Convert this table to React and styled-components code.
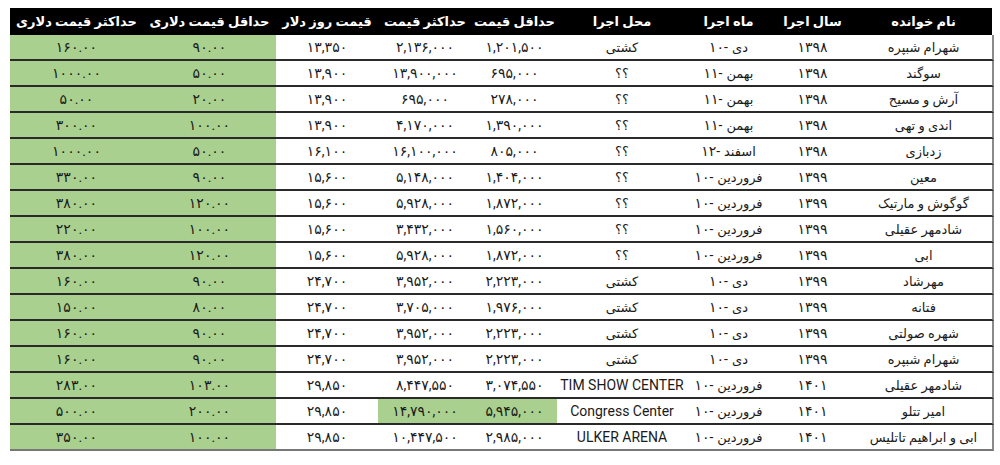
import React from "react";
import styled, { createGlobalStyle } from "styled-components";

const Global = createGlobalStyle`
  html, body { margin: 0; padding: 0; background: #fff; }
  body { font-family: Roboto, "DejaVu Sans", sans-serif; }
`;

const COLS = "137px 85px 83px 130px 85px 94px 102px 133px 133px";

const Page = styled.div`
  padding: 8px 0 0 10px;
  width: 984px;
`;

const Table = styled.div`
  direction: rtl;
  width: 984px;
  display: flex;
  flex-direction: column;
`;

const HeadRow = styled.div`
  display: grid;
  grid-template-columns: ${COLS};
  height: 27px;
  background: #000;
  margin-right: 2px;
`;

const HeadCell = styled.div`
  color: #fff;
  font-weight: bold;
  font-size: 13px;
  display: flex;
  align-items: center;
  justify-content: center;
  white-space: nowrap;
`;

const Row = styled.div`
  display: grid;
  grid-template-columns: ${COLS};
  height: 26px;
  box-sizing: border-box;
  border-bottom: 2px solid ${(p) => (p.$last ? "#777" : "#2a2a2a")};
  border-right: 2px solid #8a8a8a;
`;

const Cell = styled.div`
  background: ${(p) => (p.$green ? "#a9d08e" : "#fff")};
  color: #1a1a1a;
  font-size: ${(p) => (p.$num ? "14px" : p.$latin ? "14px" : "13px")};
  letter-spacing: ${(p) => (p.$num ? "1.5px" : "0")};
  display: flex;
  align-items: center;
  justify-content: center;
  white-space: nowrap;
  direction: ${(p) => (p.$num ? "ltr" : "rtl")};
`;

const MonthCell = styled.div`
  display: flex;
  direction: ltr;
  align-items: center;
  justify-content: center;
  gap: 4px;
  color: #1a1a1a;
  font-size: 13px;
  white-space: nowrap;
`;

const MonthNum = styled.span`
  font-size: 14px;
  letter-spacing: 1px;
`;

const headers = [
  "نام خوانده",
  "سال اجرا",
  "ماه اجرا",
  "محل اجرا",
  "حداقل قیمت",
  "حداکثر قیمت",
  "قیمت روز دلار",
  "حداقل قیمت دلاری",
  "حداکثر قیمت دلاری",
];

const rows = [
  ["شهرام شبپره", "۱۳۹۸", "۱۰", "دی", "کشتی", "۱,۲۰۱,۵۰۰", "۲,۱۳۶,۰۰۰", "۱۳,۳۵۰", "۹۰.۰۰", "۱۶۰.۰۰"],
  ["سوگند", "۱۳۹۸", "۱۱", "بهمن", "؟؟", "۶۹۵,۰۰۰", "۱۳,۹۰۰,۰۰۰", "۱۳,۹۰۰", "۵۰.۰۰", "۱۰۰۰.۰۰"],
  ["آرش و مسیح", "۱۳۹۸", "۱۱", "بهمن", "؟؟", "۲۷۸,۰۰۰", "۶۹۵,۰۰۰", "۱۳,۹۰۰", "۲۰.۰۰", "۵۰.۰۰"],
  ["اندی و تهی", "۱۳۹۸", "۱۱", "بهمن", "؟؟", "۱,۳۹۰,۰۰۰", "۴,۱۷۰,۰۰۰", "۱۳,۹۰۰", "۱۰۰.۰۰", "۳۰۰.۰۰"],
  ["زدبازی", "۱۳۹۸", "۱۲", "اسفند", "؟؟", "۸۰۵,۰۰۰", "۱۶,۱۰۰,۰۰۰", "۱۶,۱۰۰", "۵۰.۰۰", "۱۰۰۰.۰۰"],
  ["معین", "۱۳۹۹", "۱۰", "فروردین", "؟؟", "۱,۴۰۴,۰۰۰", "۵,۱۴۸,۰۰۰", "۱۵,۶۰۰", "۹۰.۰۰", "۳۳۰.۰۰"],
  ["گوگوش و مارتیک", "۱۳۹۹", "۱۰", "فروردین", "؟؟", "۱,۸۷۲,۰۰۰", "۵,۹۲۸,۰۰۰", "۱۵,۶۰۰", "۱۲۰.۰۰", "۳۸۰.۰۰"],
  ["شادمهر عقیلی", "۱۳۹۹", "۱۰", "فروردین", "؟؟", "۱,۵۶۰,۰۰۰", "۳,۴۳۲,۰۰۰", "۱۵,۶۰۰", "۱۰۰.۰۰", "۲۲۰.۰۰"],
  ["ابی", "۱۳۹۹", "۱۰", "فروردین", "؟؟", "۱,۸۷۲,۰۰۰", "۵,۹۲۸,۰۰۰", "۱۵,۶۰۰", "۱۲۰.۰۰", "۳۸۰.۰۰"],
  ["مهرشاد", "۱۳۹۹", "۱۰", "دی", "کشتی", "۲,۲۲۳,۰۰۰", "۳,۹۵۲,۰۰۰", "۲۴,۷۰۰", "۹۰.۰۰", "۱۶۰.۰۰"],
  ["فتانه", "۱۳۹۹", "۱۰", "دی", "کشتی", "۱,۹۷۶,۰۰۰", "۳,۷۰۵,۰۰۰", "۲۴,۷۰۰", "۸۰.۰۰", "۱۵۰.۰۰"],
  ["شهره صولتی", "۱۳۹۹", "۱۰", "دی", "کشتی", "۲,۲۲۳,۰۰۰", "۳,۹۵۲,۰۰۰", "۲۴,۷۰۰", "۹۰.۰۰", "۱۶۰.۰۰"],
  ["شهرام شبپره", "۱۳۹۹", "۱۰", "دی", "کشتی", "۲,۲۲۳,۰۰۰", "۳,۹۵۲,۰۰۰", "۲۴,۷۰۰", "۹۰.۰۰", "۱۶۰.۰۰"],
  ["شادمهر عقیلی", "۱۴۰۱", "۱۰", "فروردین", "TIM SHOW CENTER", "۳,۰۷۴,۵۵۰", "۸,۴۴۷,۵۵۰", "۲۹,۸۵۰", "۱۰۳.۰۰", "۲۸۳.۰۰"],
  ["امیر تتلو", "۱۴۰۱", "۱۰", "فروردین", "Congress Center", "۵,۹۴۵,۰۰۰", "۱۴,۷۹۰,۰۰۰", "۲۹,۸۵۰", "۲۰۰.۰۰", "۵۰۰.۰۰", true],
  ["ابی و ابراهیم تاتلیس", "۱۴۰۱", "۱۰", "فروردین", "ULKER ARENA", "۲,۹۸۵,۰۰۰", "۱۰,۴۴۷,۵۰۰", "۲۹,۸۵۰", "۱۰۰.۰۰", "۳۵۰.۰۰"],
];

export default function App() {
  return (
    <>
      <Global />
      <Page>
        <Table>
          <HeadRow>
            {headers.map((h) => (
              <HeadCell key={h}>{h}</HeadCell>
            ))}
          </HeadRow>
          {rows.map((r, i) => {
            const [name, year, mNum, mName, place, minP, maxP, rate, minD, maxD, hl] = r;
            const latin = /[A-Za-z]/.test(place);
            return (
              <Row key={i} $last={i === rows.length - 1}>
                <Cell>{name}</Cell>
                <Cell $num>{year}</Cell>
                <MonthCell>
                  <MonthNum>{mNum}-</MonthNum>
                  <span>{mName}</span>
                </MonthCell>
                <Cell $latin={latin}>{place}</Cell>
                <Cell $num $green={hl}>{minP}</Cell>
                <Cell $num $green={hl}>{maxP}</Cell>
                <Cell $num>{rate}</Cell>
                <Cell $num $green>{minD}</Cell>
                <Cell $num $green>{maxD}</Cell>
              </Row>
            );
          })}
        </Table>
      </Page>
    </>
  );
}
